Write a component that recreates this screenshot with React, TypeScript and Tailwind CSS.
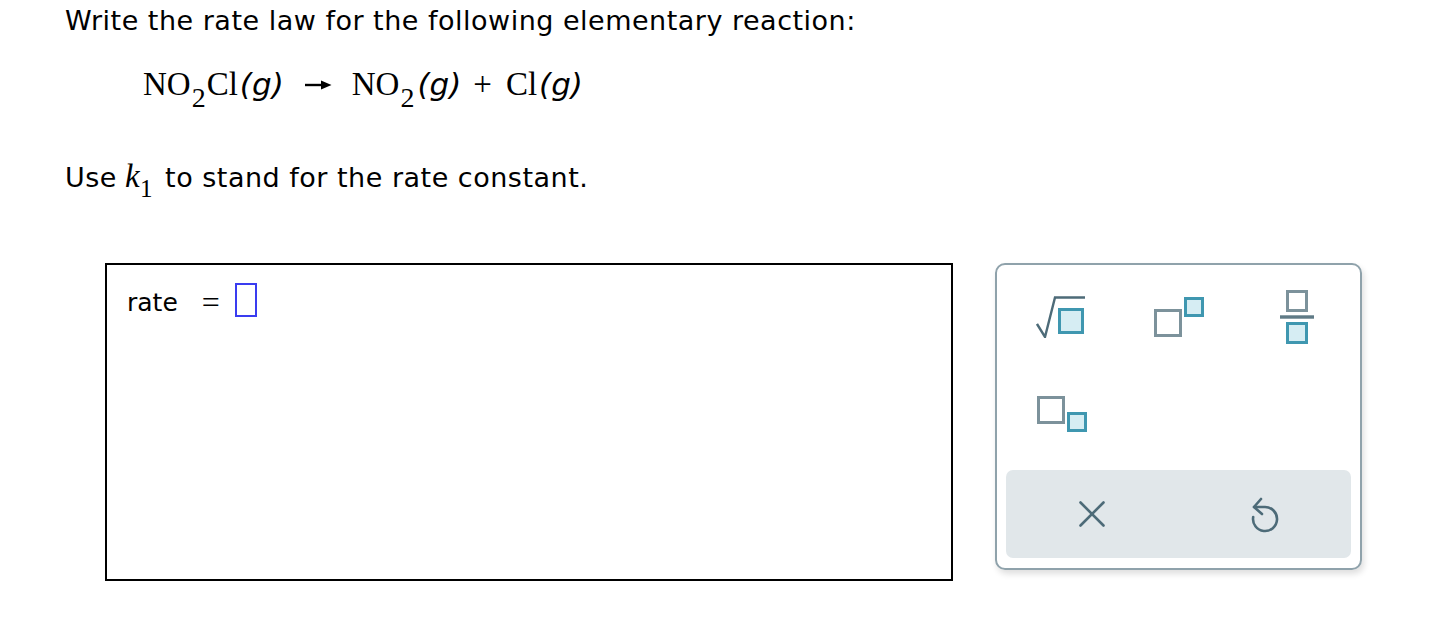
const sans = 'font-["DejaVu_Sans",Verdana,sans-serif]';
const serif = 'font-["Liberation_Serif","Times_New_Roman",serif]';

function SqrtIcon() {
  return (
    <svg width="50" height="42" viewBox="0 0 50 42">
      <path d="M1 28 L9 41 L19 1.5 L49 1.5" fill="none" stroke="#4d6b78" strokeWidth="2.4" strokeLinejoin="miter" />
      <rect x="23.5" y="13.5" width="23" height="23" fill="#d6edf3" stroke="#3f97b0" strokeWidth="3" />
    </svg>
  );
}

function SupIcon() {
  return (
    <svg width="52" height="42" viewBox="0 0 52 42">
      <rect x="2.5" y="14.5" width="25" height="25" fill="#fff" stroke="#7c929b" strokeWidth="3" />
      <rect x="32.5" y="2.5" width="17" height="17" fill="#d6edf3" stroke="#3f97b0" strokeWidth="3" />
    </svg>
  );
}

function FracIcon() {
  return (
    <svg width="36" height="54" viewBox="0 0 36 54">
      <rect x="8.5" y="1.5" width="19" height="19" fill="#fff" stroke="#7c929b" strokeWidth="3" />
      <rect x="1" y="25" width="34" height="4" fill="#8da0a8" />
      <rect x="1" y="26" width="34" height="2" fill="#5f7a86" />
      <rect x="8.5" y="33.5" width="19" height="19" fill="#d6edf3" stroke="#3f97b0" strokeWidth="3" />
    </svg>
  );
}

function SubIcon() {
  return (
    <svg width="52" height="38" viewBox="0 0 52 38">
      <rect x="2.5" y="2.5" width="25" height="25" fill="#fff" stroke="#7c929b" strokeWidth="3" />
      <rect x="32.5" y="18.5" width="17" height="17" fill="#d6edf3" stroke="#3f97b0" strokeWidth="3" />
    </svg>
  );
}

function ClearIcon() {
  return (
    <svg width="26" height="26" viewBox="0 0 26 26">
      <path d="M1.5 1.5 L24.5 24.5 M24.5 1.5 L1.5 24.5" stroke="#4d6b78" strokeWidth="2.6" strokeLinecap="round" />
    </svg>
  );
}

function UndoIcon() {
  return (
    <svg width="30" height="38" viewBox="0 0 30 38">
      <path d="M4 12 H15 A12 12 0 1 1 3.2 22" fill="none" stroke="#4d6b78" strokeWidth="2.6" strokeLinecap="round" />
      <path d="M11 4 L4 12 L12 19" fill="none" stroke="#4d6b78" strokeWidth="2.6" strokeLinecap="round" strokeLinejoin="round" />
    </svg>
  );
}

function Gas() {
  return <span className={`${sans} italic text-[31px] ml-[2px]`}>(g)</span>;
}

function Sub({ n }: { n: string }) {
  return <span className={`${serif} text-[28px] relative top-[12px] mx-[1px]`}>{n}</span>;
}

export default function App() {
  return (
    <div className={`w-[1452px] h-[622px] bg-white text-black ${sans}`}>
      <div className="pl-[65px] pt-[4px]">
        <p className="text-[27px] leading-[34px] tracking-[0.5px]">Write the rate law for the following elementary reaction:</p>

        {/* Reaction */}
        <div className="pl-[78px] pt-[26px] h-[102px] flex items-baseline text-[33px] leading-[40px]">
          <span className={serif}>NO</span>
          <Sub n="2" />
          <span className={serif}>Cl</span>
          <Gas />
          <svg width="28" height="12" viewBox="0 0 28 12" className="ml-[20px] mr-[20px] relative -top-[4px]">
            <path d="M1 6 H20" stroke="#000" strokeWidth="2.4" />
            <path d="M17 1.5 L27.5 6 L17 10.5 Z" fill="#000" />
          </svg>
          <span className={serif}>NO</span>
          <Sub n="2" />
          <Gas />
          <span className={`${serif} ml-[12px] mr-[14px]`}>+</span>
          <span className={serif}>Cl</span>
          <Gas />
        </div>

        <p className="pt-[19px] h-[64px] text-[27px] leading-[34px] tracking-[0.5px] flex items-baseline">
          <span>Use</span>
          <span className={`${serif} italic text-[33px] ml-[8px]`}>k</span>
          <span className={`${serif} text-[25px] relative top-[10px] mr-[12px]`}>1</span>
          <span>to stand for the rate constant.</span>
        </p>
      </div>

      <div className="flex pl-[105px] pt-[59px] gap-[42px]">
        {/* Answer box */}
        <div className="w-[848px] h-[318px] border-2 border-black pl-[20px] pt-[20px]">
          <div className="flex items-center h-[36px] text-[25px]">
            <span>rate</span>
            <span className={`${serif} text-[32px] ml-[24px] mr-[15px] relative -top-[1px]`}>=</span>
            <span className="inline-block w-[22px] h-[34px] border-2 border-[#3a3cf0] relative -top-[3px]" />
          </div>
        </div>

        {/* Palette */}
        <div className="w-[367px] h-[307px] border-2 border-[#8fa2ab] rounded-[10px] shadow-[2px_4px_6px_rgba(0,0,0,0.13)] px-[9px] pt-[25px] flex flex-col">
          <div className="grid grid-cols-3 h-[52px] items-center">
            <div className="flex justify-center -ml-[6px]"><SqrtIcon /></div>
            <div className="flex justify-center"><SupIcon /></div>
            <div className="flex justify-center pl-[6px]"><FracIcon /></div>
          </div>
          <div className="grid grid-cols-3 h-[52px] items-center mt-[46px]">
            <div className="flex justify-center -ml-[4px]"><SubIcon /></div>
          </div>
          <div className="mt-[30px] h-[88px] bg-[#e1e7ea] rounded-[7px] grid grid-cols-2 items-center">
            <div className="flex justify-center"><ClearIcon /></div>
            <div className="flex justify-center"><UndoIcon /></div>
          </div>
        </div>
      </div>
    </div>
  );
}
